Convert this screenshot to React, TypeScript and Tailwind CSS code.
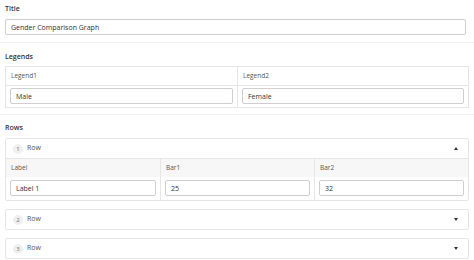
import {useState} from "react";

type RowData = {label: string; bar1: string; bar2: string};

const rows: RowData[] = [
    {label: "Label 1", bar1: "25", bar2: "32"},
    {label: "Label 2", bar1: "18", bar2: "20"},
    {label: "Label 3", bar1: "40", bar2: "36"},
];

function TextInput({value}: {value: string}) {
    return (
        <input
            readOnly
            value={value}
            className="block h-[16px] w-full rounded-[2px] border border-[#cfcfcf] bg-white px-[5px] text-[7px] text-[#333] outline-none"
        />
    );
}

function Caret({open}: {open: boolean}) {
    return (
        <svg width="4" height="3" viewBox="0 0 4 3" className="fill-[#333]">
            {open ? <path d="M0 3 L2 0 L4 3 Z"/> : <path d="M0 0 L4 0 L2 3 Z"/>}
        </svg>
    );
}

function RowItem({index, row, open}: {index: number; row: RowData; open: boolean}) {
    return (
        <div className="rounded-[2px] border border-[#e6e6e6] bg-white">
            <div className="flex h-[19px] items-center justify-between pr-[10px] pl-[7px]">
                <div className="flex items-center gap-[4px]">
                    <span className="flex size-[10px] items-center justify-center rounded-full bg-[#efefef] text-[6px] leading-none text-[#777]">{index}</span>
                    <span className="text-[7px] text-[#555]">Row</span>
                </div>
                <Caret open={open}/>
            </div>
            {open && (
                <div className="grid grid-cols-3 border-t border-[#e6e6e6]">
                    {["Label", "Bar1", "Bar2"].map((h, i) => (
                        <div key={h} className={"flex h-[18px] items-center bg-[#f7f7f7] px-[5px] text-[6.5px] text-[#555] " + (i > 0 ? "border-l border-[#e6e6e6]" : "")}>{h}</div>
                    ))}
                    {[row.label, row.bar1, row.bar2].map((v, i) => (
                        <div key={i} className={"px-[4px] pt-[3px] pb-[4px] " + (i > 0 ? "border-l border-[#e6e6e6]" : "")}>
                            <TextInput value={v}/>
                        </div>
                    ))}
                </div>
            )}
        </div>
    );
}

function App() {
    const [openRow] = useState<number>(0);
    return (
        <div className="h-[260px] w-[474px] overflow-hidden bg-white font-['Open_Sans'] text-[#333]">
            <section className="border-b border-[#f2f2f2] px-[5px] pt-[4px] pb-[7px]">
                <h2 className="mb-[5px] h-[10px] text-[7px] leading-[10px] font-semibold">Title</h2>
                <div className="pr-[3px]">
                    <TextInput value="Gender Comparison Graph"/>
                </div>
            </section>
            <section className="border-b border-[#f2f2f2] px-[5px] pt-[9px] pb-[6px]">
                <h2 className="mb-[4px] h-[10px] text-[7px] leading-[10px] font-semibold">Legends</h2>
                <div className="grid grid-cols-2 border border-[#e6e6e6]">
                    <div className="flex h-[19px] items-center border-b border-[#e6e6e6] px-[5px] text-[6.5px] text-[#555]">Legend1</div>
                    <div className="flex h-[19px] items-center border-b border-l border-[#e6e6e6] px-[5px] text-[6.5px] text-[#555]">Legend2</div>
                    <div className="px-[4px] pt-[2px] pb-[3px]"><TextInput value="Male"/></div>
                    <div className="border-l border-[#e6e6e6] px-[4px] pt-[2px] pb-[3px]"><TextInput value="Female"/></div>
                </div>
            </section>
            <section className="px-[5px] pt-[8px]">
                <h2 className="mb-[5px] h-[10px] text-[7px] leading-[10px] font-semibold">Rows</h2>
                <div className="flex flex-col gap-[8px]">
                    {rows.map((row, i) => (
                        <RowItem key={i} index={i + 1} row={row} open={i === openRow}/>
                    ))}
                </div>
            </section>
        </div>
    );
}

export default App;
